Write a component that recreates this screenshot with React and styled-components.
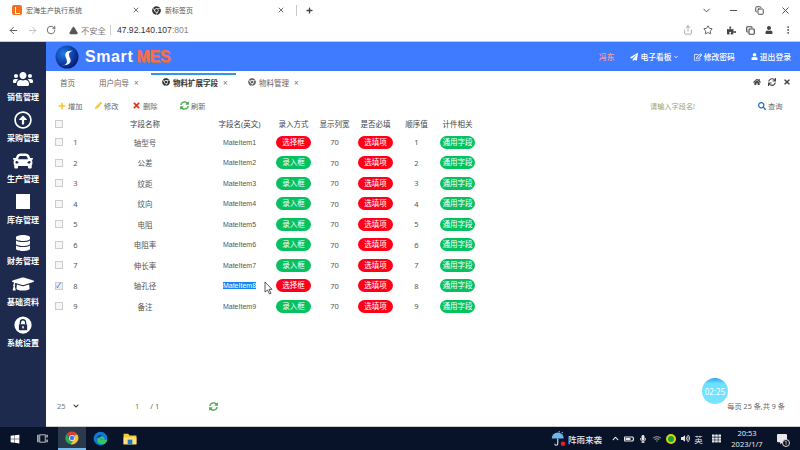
import React from 'react';
import styled, { createGlobalStyle } from 'styled-components';
import {
  FaUsers, FaRegArrowAltCircleUp, FaCar, FaDatabase, FaGraduationCap, FaPaperPlane, FaRegEdit, FaUser,
  FaHome, FaSync, FaTimes, FaSearch, FaChrome, FaPlus, FaPencilAlt, FaSyncAlt, FaWindows, FaPuzzlePiece,
  FaChevronDown, FaMicrophone, FaWifi, FaVolumeUp, FaCommentAlt, FaBatteryThreeQuarters, FaChevronUp, FaTh,
} from 'react-icons/fa';
import { ArrowLeft, ArrowRight, RotateCw, Share, Star, MoreVertical, ChevronDown, Minus, Copy, X, TriangleAlert } from 'lucide-react';

const CJK = `"Noto Sans", "Noto Sans CJK SC", sans-serif`;

const GlobalStyle = createGlobalStyle`
  html, body { margin: 0; padding: 0; background: #fff; }
  * { box-sizing: border-box; }
`;

const Page = styled.div`
  width: 800px;
  height: 450px;
  display: flex;
  flex-direction: column;
  overflow: hidden;
  position: relative;
  font-family: ${CJK};
  color: #444;
`;

/* browser chrome */
const TabStrip = styled.div`
  height: 20px;
  display: flex;
  align-items: center;
  padding-left: 12px;
  font-size: 7px;
  color: #555;
`;
const BrowserTab = styled.div`
  width: 140px;
  display: flex;
  align-items: center;
  gap: 4px;
  padding-right: ${(p) => p.$closeGap}px;
  svg.close { margin-left: auto; }
`;
const Favicon = styled.span`
  width: 10px;
  height: 10px;
  border-radius: 2px;
  background: #f4701e;
  display: flex;
  align-items: center;
  justify-content: center;
  &::after {
    content: '';
    width: 4px;
    height: 6px;
    border-left: 1px solid #fff;
    border-bottom: 1px solid #fff;
  }
`;
const StripDivider = styled.span`
  width: 1px;
  height: 11px;
  background: #c8c8c8;
  margin-right: 9px;
  margin-left: 4px;
`;
const WindowButtons = styled.div`
  margin-left: auto;
  display: flex;
  align-items: center;
  gap: 16px;
  padding-right: 9px;
  color: #444;
`;
const AddressBar = styled.div`
  height: 22px;
  display: flex;
  align-items: center;
  padding: 0 7px 1px 8px;
  gap: 8px;
  color: #555;
  border-bottom: 1px solid #bccde0;
`;
const Insecure = styled.span`
  font-size: 8.3px;
  color: #777;
  margin-left: 5px;
  display: flex;
  align-items: center;
  gap: 3px;
`;
const UrlText = styled.span`
  font-family: "Liberation Sans", sans-serif;
  font-size: 8.6px;
  color: #333;
  padding-left: 6px;
  margin-left: -4px;
  border-left: 1px solid #ccc;
  line-height: 10px;
  span { color: #888; }
`;
const BarRight = styled.div`
  margin-left: auto;
  display: flex;
  align-items: center;
  gap: 10px;
  color: #444;
`;
const PuzzleGap = styled.span`
  display: flex;
  margin-left: 4px;
`;

/* app */
const Body = styled.div`
  flex: 1;
  display: flex;
  min-height: 0;
`;
const Sidebar = styled.nav`
  width: 46px;
  background: #1d2a4e;
  padding-top: 30px;
  display: flex;
  flex-direction: column;
`;
const SideItem = styled.div`
  height: 41px;
  display: flex;
  flex-direction: column;
  align-items: center;
  color: #fff;
  font-size: 8px;
  font-weight: 700;
  line-height: 10px;
  white-space: nowrap;
`;
const SideIcon = styled.div`
  height: 23px;
  display: flex;
  align-items: center;
  justify-content: center;
  margin-top: -5px;
  margin-bottom: 2px;
`;
const WhiteSquare = styled.span`
  width: 14px;
  height: 15px;
  background: #fff;
  display: block;
`;
const Main = styled.main`
  flex: 1;
  display: flex;
  flex-direction: column;
  position: relative;
  min-width: 0;
  border-bottom: 1px solid #ccc;
`;
const Header = styled.header`
  height: 29px;
  background: #3f7bff;
  display: flex;
  align-items: center;
  padding: 0 9px;
  color: #fff;
  font-size: 7.8px;
  font-weight: 500;
`;
const Brand = styled.div`
  font-family: "Liberation Sans", sans-serif;
  font-size: 16px;
  font-weight: 700;
  letter-spacing: 0.6px;
  margin-left: 6px;
  display: flex;
  gap: 3px;
`;
const BrandAccent = styled.span`
  color: #ff6a50;
  letter-spacing: -0.3px;
  text-shadow: 1px 1px 0 #b9784f;
`;
const HeaderLinks = styled.div`
  margin-left: auto;
  display: flex;
  align-items: center;
  gap: 16px;
`;
const HeaderLink = styled.span`
  display: flex;
  align-items: center;
  gap: 2px;
  color: ${(p) => p.$accent ? '#ff9a9a' : '#fff'};
`;
const PageTabs = styled.div`
  height: 25px;
  display: flex;
  align-items: stretch;
  font-size: 7.5px;
  color: #666;
  padding-right: 9px;
`;
const PageTab = styled.div`
  margin-top: 2px;
  width: ${(p) => p.$w}px;
  padding-left: ${(p) => p.$pad}px;
  padding-bottom: 7px;
  display: flex;
  align-items: center;
  gap: 3px;
  white-space: nowrap;
  color: ${(p) => p.$active ? '#333' : '#666'};
  font-weight: ${(p) => p.$active ? 700 : 400};
  border-top: 2px solid ${(p) => p.$active ? '#2f9bdc' : 'transparent'};
`;
const TabClose = styled.span`
  font-size: 8px;
  font-weight: 400;
  color: #777;
  margin-left: 2px;
`;
const TabTools = styled.div`
  margin-left: auto;
  display: flex;
  align-items: center;
  gap: 7px;
  padding-bottom: 4px;
  color: #444;
`;
const ToolRow = styled.div`
  height: 19px;
  display: flex;
  align-items: center;
  padding: 0 18px 0 12px;
  font-size: 7.2px;
  color: #666;
`;
const ToolButton = styled.span`
  display: flex;
  align-items: center;
  gap: 2px;
  width: ${(p) => p.$w}px;
  white-space: nowrap;
  svg { flex-shrink: 0; }
`;
const SearchLabel = styled.span`
  margin-left: auto;
  color: #a3a16f;
  margin-right: 63px;
`;
const Table = styled.div`
  flex: 1;
  font-size: 7.5px;
`;
const Row = styled.div`
  display: grid;
  grid-template-columns: 17px 17px 122px 67px repeat(5, 41px);
  padding-left: 4px;
  height: ${(p) => p.$head ? 17 : 20.5}px;
  align-items: center;
  color: ${(p) => p.$head ? '#444' : '#555'};
`;
const Cell = styled.div`
  display: flex;
  justify-content: center;
  align-items: center;
  white-space: nowrap;
`;
const EnCell = styled(Cell)`
  font-family: "Liberation Sans", sans-serif;
  font-size: 7px;
`;
const Selected = styled.span`
  background: #1585f5;
  color: #fff;
`;
const CheckBox = styled.span`
  width: 8px;
  height: 8px;
  border: 1px solid #ccc;
  background: ${(p) => p.$on ? '#e8f0fb' : '#f6f6f6'};
  display: flex;
  align-items: center;
  justify-content: center;
  color: #2b5fc0;
  font-size: 7px;
  line-height: 1;
`;
const Pill = styled.span`
  width: 35px;
  height: 13px;
  border-radius: 7px;
  color: #fff;
  background: ${(p) => p.$red ? '#ff0018' : '#07c160'};
  font-size: 7.5px;
  line-height: 13px;
  text-align: center;
`;
const Footer = styled.div`
  height: 40px;
  display: flex;
  align-items: center;
  padding: 0 15px 0 10px;
  font-size: 7.5px;
  color: #777;
`;
const PageSize = styled.span`
  width: 74px;
  display: flex;
  align-items: center;
  gap: 7px;
  padding-left: 1px;
`;
const PageNo = styled.span`
  width: 79px;
  display: flex;
  gap: 11px;
  padding-left: 5px;
  color: #807a4a;
  span { color: #666; }
`;
const Summary = styled.span`
  margin-left: auto;
  color: #666;
  font-size: 7.2px;
`;
const TimerBubble = styled.div`
  position: absolute;
  left: 656px;
  top: 336px;
  width: 26px;
  height: 26px;
  border-radius: 50%;
  background: linear-gradient(#2ea6ee 0, #70e0ff 22%, #76e4ff 100%);
  color: #fff;
  font-size: 8px;
  display: flex;
  align-items: center;
  justify-content: center;
`;
const Cursor = styled.svg`
  position: absolute;
  left: 218px;
  top: 239px;
`;

/* taskbar */
const Taskbar = styled.footer`
  height: 23px;
  background: #081329;
  display: flex;
  align-items: center;
  color: #fff;
  padding-left: 9px;
`;
const TaskSlot = styled.span`
  width: ${(p) => p.$w}px;
  height: 100%;
  padding-left: ${(p) => p.$pad || 0}px;
  display: flex;
  align-items: center;
  justify-content: center;
  background: ${(p) => p.$active ? '#2b394c' : 'transparent'};
  border-bottom: ${(p) => p.$active ? '2px solid #76b9ed' : 'none'};
`;
const Tray = styled.div`
  margin-left: auto;
  display: flex;
  align-items: center;
  font-size: 8.5px;
  padding-right: 8px;
  color: #e8e8e8;
`;
const TraySlot = styled.span`
  width: ${(p) => p.$w}px;
  display: flex;
  align-items: center;
  justify-content: center;
  position: relative;
`;
const TrayText = styled.span`
  width: 42px;
  padding-left: 2px;
  font-weight: 500;
  white-space: nowrap;
`;
const Clock = styled.span`
  width: 40px;
  display: flex;
  flex-direction: column;
  align-items: center;
  font-size: 7.5px;
  line-height: 11px;
  margin-right: 5px;
`;
const YellowDot = styled.span`
  width: 10px;
  height: 10px;
  border-radius: 50%;
  background: #1f9f3c;
  border: 2.5px solid #d8d80c;
`;
const NoticeBadge = styled.span`
  position: absolute;
  right: 2px;
  bottom: -3px;
  width: 8px;
  height: 8px;
  border-radius: 50%;
  background: #081329;
  border: 1px solid #ddd;
  font-size: 5px;
  line-height: 6px;
  text-align: center;
  color: #fff;
`;

function ChromeLogo({ size = 14 }) {
  return (
    <svg width={size} height={size} viewBox="0 0 24 24">
      <path d="M12 1a11 11 0 0 1 9.500 5.500H12a5.500 5.500 0 0 0-5.200 3.700L3 5a11 11 0 0 1 9-4z" fill="#e33b2e" />
      <path d="M3 5l4.600 8.500a5.500 5.500 0 0 0 5.600 4L9.600 22.700A11 11 0 0 1 3 5z" fill="#2da94f" />
      <path d="M21.500 6.500A11 11 0 0 1 9.600 22.700l4.300-6.600a5.500 5.500 0 0 0 1-9.600z" fill="#fbc02d" />
      <circle cx="12" cy="12" r="5" fill="#fff" />
      <circle cx="12" cy="12" r="3.800" fill="#3b78e7" />
    </svg>
  );
}

function EdgeLogo() {
  return (
    <svg width="15" height="15" viewBox="0 0 24 24">
      <circle cx="12" cy="12" r="11" fill="#0c7ad6" />
      <path d="M23 13c0 5-5 9-10 8-4-.6-6-3-6-6 0-4 4-7 8-6 3 .6 4 3 3 5h5z" fill="#35c56b" />
      <path d="M18 13c-3 1-7 0-7-2.500 0-2 2-3 4-3-2-2-8-1-9 4 3-3 7-1 7 2z" fill="#0a2c66" />
    </svg>
  );
}

function FolderLogo() {
  return (
    <svg width="14" height="13" viewBox="0 0 24 22">
      <path d="M1 3h8l2 3h12v15H1z" fill="#f7c83a" />
      <rect x="1" y="9" width="22" height="12" fill="#ffe07a" />
      <rect x="8" y="13" width="8" height="8" fill="#1e78c8" />
    </svg>
  );
}

function TaskViewIcon() {
  return (
    <svg width="11" height="11" viewBox="0 0 12 12" fill="none" stroke="#ccc">
      <rect x="3" y="2" width="6" height="8" />
      <path d="M1 2v8M11 2v3M11 7v3" strokeWidth="1.500" />
    </svg>
  );
}

function LogoMark() {
  return (
    <svg width="24" height="24" viewBox="0 0 24 24">
      <defs>
        <radialGradient id="orb" cx="35%" cy="35%" r="75%">
          <stop offset="0" stopColor="#1d7cf0" />
          <stop offset="1" stopColor="#04126a" />
        </radialGradient>
      </defs>
      <circle cx="12" cy="12" r="11.500" fill="url(#orb)" />
      <path d="M6 20c6 1 7-3 5-7s0-8 7-7c-5 .5-4.500 4-3 7s1 8-9 7z" fill="#fff" />
    </svg>
  );
}

function LockBadge() {
  return (
    <svg width="18" height="18" viewBox="0 0 24 24">
      <circle cx="12" cy="12" r="11.500" fill="#fff" />
      <path d="M8.500 11V8.500a3.500 3.500 0 0 1 7 0V11" fill="none" stroke="#1d2a4e" strokeWidth="1.800" />
      <rect x="6.500" y="11" width="11" height="8" rx="1" fill="#1d2a4e" />
      <rect x="11" y="13.500" width="2" height="3" fill="#fff" />
    </svg>
  );
}

function WeatherIcon() {
  return (
    <svg width="15" height="17" viewBox="0 0 20 22">
      <path d="M1 11a8 8 0 0 1 16 0z" fill="#6db7e8" />
      <path d="M9 11v7a2 2 0 0 1-4 0" fill="none" stroke="#cfe6f7" strokeWidth="1.500" />
      <circle cx="11" cy="2" r="1" fill="#6db7e8" />
      <circle cx="15" cy="3" r="1" fill="#6db7e8" />
      <circle cx="16" cy="18" r="3" fill="#ee1c25" />
    </svg>
  );
}

const menu = [
  { label: '销售管理', icon: <FaUsers size={20} /> },
  { label: '采购管理', icon: <FaRegArrowAltCircleUp size={18} /> },
  { label: '生产管理', icon: <FaCar size={20} /> },
  { label: '库存管理', icon: <WhiteSquare /> },
  { label: '财务管理', icon: <FaDatabase size={16} /> },
  { label: '基础资料', icon: <FaGraduationCap size={22} /> },
  { label: '系统设置', icon: <LockBadge /> },
];

const fields = [
  ['轴型号', true], ['公差'], ['纹距'], ['纹向'], ['电阻'], ['电阻率'], ['伸长率'], ['轴孔径', true], ['备注'],
];

export default function App() {
  return (
    <Page>
      <GlobalStyle />
      <TabStrip>
        <BrowserTab $closeGap={12}>
          <Favicon />
          <span>宏海生产执行系统</span>
          <X className="close" size={8} strokeWidth={2.5} />
        </BrowserTab>
        <BrowserTab $closeGap={7}>
          <FaChrome size={9} color="#333" />
          <span>新标签页</span>
          <X className="close" size={8} strokeWidth={2.5} />
        </BrowserTab>
        <StripDivider />
        <FaPlus size={7} color="#444" />
        <WindowButtons>
          <ChevronDown size={11} />
          <Minus size={11} />
          <Copy size={9} strokeWidth={2.5} />
          <X size={11} />
        </WindowButtons>
      </TabStrip>
      <AddressBar>
        <ArrowLeft size={11} />
        <ArrowRight size={11} color="#bbb" />
        <RotateCw size={10} />
        <Insecure><TriangleAlert size={9} fill="#555" color="#555" />不安全</Insecure>
        <UrlText>47.92.140.107<span>:801</span></UrlText>
        <BarRight>
          <Share size={10} color="#999" />
          <Star size={10} />
          <PuzzleGap><FaPuzzlePiece size={9} /></PuzzleGap>
          <Copy size={9} strokeWidth={3} />
          <FaUser size={8} />
          <MoreVertical size={10} />
        </BarRight>
      </AddressBar>
      <Body>
        <Sidebar>
          {menu.map((m) => (
            <SideItem key={m.label}>
              <SideIcon>{m.icon}</SideIcon>
              {m.label}
            </SideItem>
          ))}
        </Sidebar>
        <Main>
          <Header>
            <LogoMark />
            <Brand>Smart<BrandAccent>MES</BrandAccent></Brand>
            <HeaderLinks>
              <HeaderLink $accent>冯东</HeaderLink>
              <HeaderLink><FaPaperPlane size={8} />电子看板<FaChevronDown size={4} /></HeaderLink>
              <HeaderLink><FaRegEdit size={8} />修改密码</HeaderLink>
              <HeaderLink><FaUser size={7} />退出登录</HeaderLink>
            </HeaderLinks>
          </Header>
          <PageTabs>
            <PageTab $w={39} $pad={14}>首页</PageTab>
            <PageTab $w={66} $pad={14}>用户向导<TabClose>×</TabClose></PageTab>
            <PageTab $w={85} $pad={11} $active><FaChrome size={8} />物料扩展字段<TabClose>×</TabClose></PageTab>
            <PageTab $w={80} $pad={12}><FaChrome size={8} />物料管理<TabClose>×</TabClose></PageTab>
            <TabTools>
              <FaHome size={8} />
              <FaSync size={8} />
              <FaTimes size={8} />
            </TabTools>
          </PageTabs>
          <ToolRow>
            <ToolButton $w={37}><FaPlus size={8} color="#f5c52a" />增加</ToolButton>
            <ToolButton $w={37}><FaPencilAlt size={7} color="#e6c52a" />修改</ToolButton>
            <ToolButton $w={48}><FaTimes size={9} color="#e0321c" />删除</ToolButton>
            <ToolButton $w={40}><FaSyncAlt size={9} color="#4aa84a" />刷新</ToolButton>
            <SearchLabel>请输入字段名!</SearchLabel>
            <ToolButton $w={24}><FaSearch size={8} color="#2b6cb8" />查询</ToolButton>
          </ToolRow>
          <Table>
            <Row $head>
              <Cell><CheckBox /></Cell>
              <Cell />
              <Cell>字段名称</Cell>
              <Cell>字段名(英文)</Cell>
              <Cell>录入方式</Cell>
              <Cell>显示列宽</Cell>
              <Cell>是否必填</Cell>
              <Cell>顺序值</Cell>
              <Cell>计件相关</Cell>
            </Row>
            {fields.map(([name, select], i) => (
              <Row key={name}>
                <Cell><CheckBox $on={i === 7}>{i === 7 ? '✓' : ''}</CheckBox></Cell>
                <Cell>{i + 1}</Cell>
                <Cell>{name}</Cell>
                <EnCell>{i === 7 ? <Selected>MateItem8</Selected> : `MateItem${i + 1}`}</EnCell>
                <Cell><Pill $red={select}>{select ? '选择框' : '录入框'}</Pill></Cell>
                <Cell>70</Cell>
                <Cell><Pill $red>选填项</Pill></Cell>
                <Cell>{i + 1}</Cell>
                <Cell><Pill>通用字段</Pill></Cell>
              </Row>
            ))}
          </Table>
          <Footer>
            <PageSize>25<FaChevronDown size={6} color="#333" /></PageSize>
            <PageNo>1<span>/ 1</span></PageNo>
            <FaSyncAlt size={9} color="#4aa84a" />
            <Summary>每页 25 条,共 9 条</Summary>
          </Footer>
          <TimerBubble>02:25</TimerBubble>
          <Cursor width="10" height="14" viewBox="0 0 10 14">
            <path d="M1 1v10l2.500-2 2 4 1.500-.7-2-4H8z" fill="#fff" stroke="#333" strokeWidth="0.800" />
          </Cursor>
        </Main>
      </Body>
      <Taskbar>
        <TaskSlot $w={11}><FaWindows size={10} /></TaskSlot>
        <TaskSlot $w={38} $pad={6}><TaskViewIcon /></TaskSlot>
        <TaskSlot $w={28} $active><ChromeLogo /></TaskSlot>
        <TaskSlot $w={28}><EdgeLogo /></TaskSlot>
        <TaskSlot $w={32}><FolderLogo /></TaskSlot>
        <Tray>
          <TraySlot $w={16}><WeatherIcon /></TraySlot>
          <TrayText>阵雨来袭</TrayText>
          <TraySlot $w={14}><FaChevronUp size={7} /></TraySlot>
          <TraySlot $w={14}><FaBatteryThreeQuarters size={10} /></TraySlot>
          <TraySlot $w={14}><FaMicrophone size={8} /></TraySlot>
          <TraySlot $w={14}><FaWifi size={8} color="#999" /></TraySlot>
          <TraySlot $w={14}><YellowDot /></TraySlot>
          <TraySlot $w={14}><FaVolumeUp size={9} /></TraySlot>
          <TraySlot $w={13}>英</TraySlot>
          <TraySlot $w={22}><FaTh size={9} /></TraySlot>
          <Clock><span>20:53</span><span>2023/1/7</span></Clock>
          <TraySlot $w={20}>
            <FaCommentAlt size={10} />
            <NoticeBadge>1</NoticeBadge>
          </TraySlot>
        </Tray>
      </Taskbar>
    </Page>
  );
}
